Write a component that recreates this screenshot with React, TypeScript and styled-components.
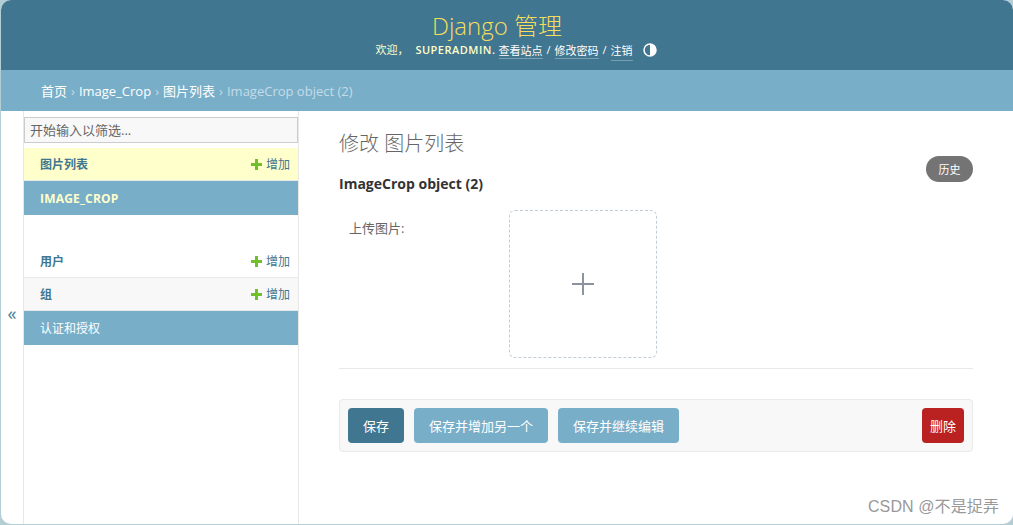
import React from "react";
import styled, { createGlobalStyle } from "styled-components";

const Global = createGlobalStyle`
  html, body { margin: 0; padding: 0; background: #b4ced6; }
  body { font-family: "Open Sans", "Noto Sans CJK SC", sans-serif; font-size: 13px; color: #333; }
  * { box-sizing: border-box; }
`;
const Page = styled.div`
  width: 1013px; height: 525px; overflow: hidden; background: #b4ced6; padding: 0 0 1px 1px;
`;
const Shell = styled.div`
  position: relative; height: 524px; background: #fff; border-radius: 10px; overflow: hidden;
  display: flex; flex-direction: column;
`;
const Header = styled.header`
  height: 70px; flex: none; background: #417690; display: flex; flex-direction: column; align-items: center; padding-top: 9px;
`;
const Brand = styled.h1`
  margin: 0; font-size: 24px; line-height: 33px; font-weight: 300; color: #f5dd5d; transform: translateX(-10px);
`;
const UserTools = styled.div`
  display: flex; align-items: center; font-size: 11px; line-height: 16px; color: #ffc; height: 16px; margin-top: 0; transform: translateX(9px);
`;
const Username = styled.strong`
  font-weight: 600; letter-spacing: .5px; margin: 0 3px 0 7px; text-transform: uppercase;
`;
const ToolLink = styled.a<{ $low?: boolean }>`
  color: #fff; border-bottom: 1px solid rgba(255,255,255,.3); line-height: 15px; margin-top: ${p => (p.$low ? "4px" : "1px")}; padding-bottom: ${p => (p.$low ? "2px" : "0")};
`;
const Sep = styled.span` color: #fff; margin: 0 4px; `;
const Theme = styled.svg` margin-left: 10px; flex: none; `;
const Crumbs = styled.nav`
  height: 41px; flex: none; background: #79aec8; color: #c4dce8; padding: 0 40px; display: flex; align-items: center; font-size: 13px;
`;
const CrumbLink = styled.a` color: #fff; `;
const CrumbSep = styled.span` margin: 0 4px; color: #c4dce8; `;
const Body = styled.div` flex: 1; display: flex; min-height: 0; `;
const Toggle = styled.div`
  width: 23px; flex: none; border-right: 1px solid #e8e8e8; display: flex; align-items: center; justify-content: center; color: #447e9b; font-size: 18px; padding-bottom: 10px; line-height: 1;
`;
const Sidebar = styled.aside`
  width: 275px; flex: none; border-right: 1px solid #e8e8e8; display: flex; flex-direction: column; padding-top: 6px;
`;
const Filter = styled.input`
  height: 26px; width: 274px; margin: 0 0 5px; padding: 0 5px; border: 1px solid #ccc; background: #f8f8f8; font: 13px "Open Sans", "Noto Sans CJK SC", sans-serif; color: #333;
  &::placeholder { color: #666; opacity: 1; }
`;
const Row = styled.div<{ $bg?: string; $mt?: number }>`
  height: 33px; display: flex; align-items: center; justify-content: space-between; padding: 0 8px 0 16px; background: ${p => p.$bg || "#fff"}; border-bottom: 1px solid #e8e8e8; margin-top: ${p => p.$mt || 0}px;
`;
const RowName = styled.span` font-size: 12px; font-weight: 700; color: #417690; `;
const Add = styled.span` display: flex; align-items: center; gap: 4px; font-size: 12px; color: #417690; `;
const Caption = styled.div<{ $strong?: boolean }>`
  height: 34px; background: #79aec8; color: ${p => (p.$strong ? "#ffc" : "#fff")}; display: flex; align-items: center; padding-left: 16px; font-size: 12px; font-weight: ${p => (p.$strong ? 700 : 400)}; letter-spacing: ${p => (p.$strong ? ".2px" : "0")};
`;
const Main = styled.main` flex: 1; padding: 19px 40px 0; min-width: 0; position: relative; `;
const Title = styled.h2` margin: 0; font-size: 20px; line-height: 28px; font-weight: 300; color: #666; `;
const History = styled.a`
  position: absolute; right: 40px; top: 45px; width: 47px; height: 26px; border-radius: 13px; background: #747474; color: #fff; font-size: 11px; display: flex; align-items: center; justify-content: center;
`;
const ObjectName = styled.h3` margin: 16px 0 0; font-size: 14px; line-height: 20px; font-weight: 700; color: #333; `;
const Field = styled.div` display: flex; margin-top: 16px; padding-bottom: 10px; border-bottom: 1px solid #e8e8e8; `;
const Label = styled.label` width: 170px; flex: none; padding: 9px 0 0 10px; font-size: 13px; line-height: 18px; color: #666; `;
const Upload = styled.div`
  width: 148px; height: 148px; border: 1px dashed #c0ccda; border-radius: 6px; display: flex; align-items: center; justify-content: center;
`;
const Submit = styled.div`
  margin-top: 30px; height: 53px; border: 1px solid #eaeaea; border-radius: 4px; background: #f8f8f8; display: flex; align-items: center; gap: 10px; padding: 0 8px;
`;
const Btn = styled.a<{ $bg: string; $w: number }>`
  width: ${p => p.$w}px; height: 35px; border-radius: 4px; background: ${p => p.$bg}; color: #fff; font-size: 13px; display: flex; align-items: center; justify-content: center;
`;
const Danger = styled(Btn)` margin-left: auto; `;
const Mark = styled.div`
  position: absolute; right: 14px; bottom: 7px; font: 16px "Liberation Sans", "Noto Sans CJK SC", sans-serif; color: #999; letter-spacing: .1px;
`;

const Plus = () => (
  <svg width="11" height="11" viewBox="0 0 11 11"><path d="M4 0h3v4h4v3H7v4H4V7H0V4h4z" fill="#70bf2b" /></svg>
);
const AddLink = () => <Add><Plus />增加</Add>;

export default function App() {
  return (
    <>
      <Global />
      <Page>
        <Shell>
          <Header>
            <Brand>Django 管理</Brand>
            <UserTools>
              欢迎，<Username>superadmin.</Username>
              <ToolLink>查看站点</ToolLink><Sep>/</Sep>
              <ToolLink>修改密码</ToolLink><Sep>/</Sep>
              <ToolLink $low>注销</ToolLink>
              <Theme width="14" height="14" viewBox="0 0 14 14">
                <circle cx="7" cy="7" r="6" fill="none" stroke="#fff" strokeWidth="1.5" />
                <path d="M7 1a6 6 0 0 1 0 12z" fill="#fff" />
              </Theme>
            </UserTools>
          </Header>
          <Crumbs>
            <CrumbLink>首页</CrumbLink><CrumbSep>›</CrumbSep>
            <CrumbLink>Image_Crop</CrumbLink><CrumbSep>›</CrumbSep>
            <CrumbLink>图片列表</CrumbLink><CrumbSep>›</CrumbSep>
            ImageCrop object (2)
          </Crumbs>
          <Body>
            <Toggle>«</Toggle>
            <Sidebar>
              <Filter placeholder="开始输入以筛选..." />
              <Row $bg="#ffc"><RowName>图片列表</RowName><AddLink /></Row>
              <Caption $strong>IMAGE_CROP</Caption>
              <Row $mt={30}><RowName>用户</RowName><AddLink /></Row>
              <Row $bg="#f8f8f8"><RowName>组</RowName><AddLink /></Row>
              <Caption>认证和授权</Caption>
            </Sidebar>
            <Main>
              <Title>修改 图片列表</Title>
              <History>历史</History>
              <ObjectName>ImageCrop object (2)</ObjectName>
              <Field>
                <Label>上传图片:</Label>
                <Upload>
                  <svg width="24" height="24" viewBox="0 0 24 24"><path d="M12 1v22M1 12h22" stroke="#8c939d" strokeWidth="2" fill="none" /></svg>
                </Upload>
              </Field>
              <Submit>
                <Btn $bg="#417690" $w={56}>保存</Btn>
                <Btn $bg="#79aec8" $w={134}>保存并增加另一个</Btn>
                <Btn $bg="#79aec8" $w={121}>保存并继续编辑</Btn>
                <Danger $bg="#ba2121" $w={42}>删除</Danger>
              </Submit>
            </Main>
          </Body>
          <Mark>CSDN @不是捉弄</Mark>
        </Shell>
      </Page>
    </>
  );
}
